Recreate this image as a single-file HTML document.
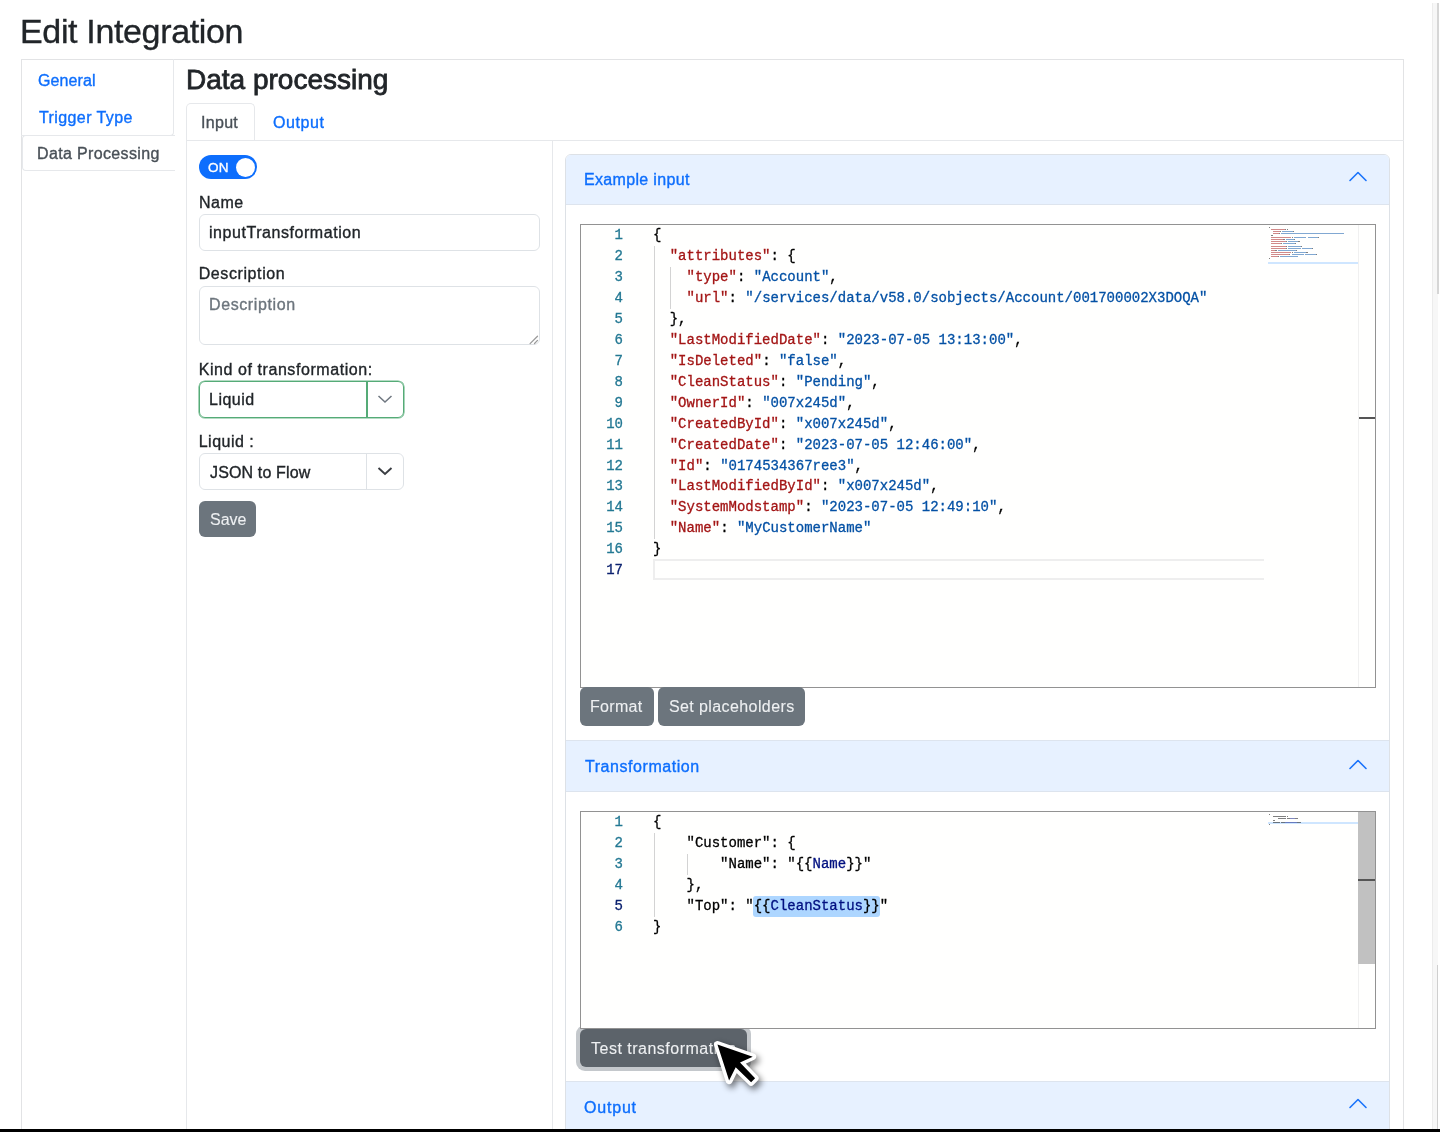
<!DOCTYPE html>
<html>
<head>
<meta charset="utf-8">
<style>
html,body{margin:0;padding:0;background:#fff;width:1440px;height:1132px;overflow:hidden;}
body{position:relative;font-family:"Liberation Sans",sans-serif;color:#212529;-webkit-font-smoothing:antialiased;}
.a{position:absolute;}
.t{position:absolute;white-space:pre;line-height:1;font-size:16px;letter-spacing:.5px;-webkit-text-stroke:.35px currentColor;}
.bl{color:#0d6efd;}
.box{position:absolute;box-sizing:border-box;}
.mono{font-family:"Liberation Mono",monospace;-webkit-text-stroke:.3px currentColor;}
.btn{position:absolute;box-sizing:border-box;background:#6c757d;border-radius:6px;}
.btn .t{color:#eef0f2;-webkit-text-stroke:.1px currentColor;}
</style>
</head>
<body>
<div id="root" style="position:absolute;left:0;top:0;width:1440px;height:1132px;will-change:transform;">
<!-- title -->
<div class="t" style="left:20px;top:14px;font-size:34px;letter-spacing:-.35px">Edit Integration</div>

<!-- outer container -->
<div class="box" style="left:21px;top:59px;width:1383px;height:1200px;border:1px solid #e2e3e5;"></div>
<!-- content column left border -->
<div class="a" style="left:186px;top:140px;width:1px;height:1000px;background:#e6e8eb;"></div>
<!-- left nav right border -->
<div class="box" style="left:21px;top:59px;width:153px;height:77px;border-right:1px solid #e6e8eb;border-bottom:1px solid #e6e8eb;border-bottom-right-radius:4px;"></div>
<!-- active nav item -->
<div class="box" style="left:22px;top:135px;width:153px;height:36px;border:1px solid #e6e8eb;border-right:none;border-radius:4px 0 0 4px;background:#fff;"></div>
<div class="t bl" style="left:38px;top:73px;letter-spacing:.1px">General</div>
<div class="t bl" style="left:39px;top:110px;letter-spacing:.4px">Trigger Type</div>
<div class="t" style="left:37px;top:146px;color:#495057;letter-spacing:.35px">Data Processing</div>

<!-- header -->
<div class="t" style="left:186px;top:65.5px;font-size:28px;letter-spacing:0;-webkit-text-stroke:.8px currentColor">Data processing</div>
<!-- tabs -->
<div class="box" style="left:186px;top:103px;width:69px;height:38px;border:1px solid #e6e8eb;border-bottom:none;border-radius:5px 5px 0 0;background:#fff;"></div>
<div class="t" style="left:201px;top:115px;color:#495057;letter-spacing:.3px">Input</div>
<div class="t bl" style="left:273px;top:115px;letter-spacing:.6px">Output</div>
<!-- tab content top border -->
<div class="a" style="left:186px;top:140px;width:1218px;height:1px;background:#e6e8eb;"></div>
<!-- vertical divider -->
<div class="a" style="left:552px;top:141px;width:1px;height:1000px;background:#e6e8eb;"></div>

<!-- form -->
<div class="a" style="left:199px;top:155px;width:58px;height:24px;border-radius:12px;background:#0d6efd;"></div>
<div class="a" style="left:236px;top:157.5px;width:19px;height:19px;border-radius:50%;background:#fff;"></div>
<div class="t" style="left:208px;top:160.5px;font-size:13.5px;color:#fff;letter-spacing:.3px">ON</div>

<div class="t" style="left:199px;top:195px;">Name</div>
<div class="box" style="left:199px;top:214px;width:341px;height:37px;border:1px solid #dee2e6;border-radius:6px;"></div>
<div class="t" style="left:209px;top:225px;letter-spacing:.55px">inputTransformation</div>

<div class="t" style="left:198.7px;top:266px;letter-spacing:.6px">Description</div>
<div class="box" style="left:199px;top:286px;width:341px;height:59px;border:1px solid #dee2e6;border-radius:6px;"></div>
<div class="t" style="left:209px;top:297px;color:#6c757d;letter-spacing:.6px">Description</div>
<svg class="a" style="left:528px;top:334px" width="12" height="12" viewBox="0 0 12 12"><path d="M2.1 9.6L9.5 2.3M6.5 9.5L9.5 6.4" stroke="#9a9a9a" stroke-width="1.3" stroke-linecap="round"/></svg>

<div class="t" style="left:198.7px;top:361.8px;letter-spacing:.57px">Kind of transformation:</div>
<div class="box" style="left:199px;top:381px;width:205px;height:37px;border:1px solid #55ab77;border-radius:6px;box-shadow:0 0 0 .6px #6db88a;"></div>
<div class="a" style="left:366px;top:382px;width:1.6px;height:35px;background:#55ab77;"></div>
<div class="t" style="left:209px;top:392px;">Liquid</div>
<svg class="a" style="left:377px;top:394px" width="16" height="10" viewBox="0 0 16 10"><path d="M1.5 2L8 8L14.5 2" fill="none" stroke="#6f7780" stroke-width="1.5"/></svg>

<div class="t" style="left:198.7px;top:433.5px;">Liquid :</div>
<div class="box" style="left:199px;top:453px;width:205px;height:37px;border:1px solid #dee2e6;border-radius:6px;"></div>
<div class="a" style="left:366px;top:454px;width:1px;height:35px;background:#dee2e6;"></div>
<div class="t" style="left:210px;top:465px;letter-spacing:.15px">JSON to Flow</div>
<svg class="a" style="left:377px;top:466px" width="16" height="10" viewBox="0 0 16 10"><path d="M1.5 2L8 8L14.5 2" fill="none" stroke="#3a3d42" stroke-width="1.9"/></svg>

<div class="btn" style="left:199px;top:501px;width:57px;height:36px;"><div class="t" style="left:11px;top:11px;letter-spacing:0">Save</div></div>

<!-- accordion -->
<div class="box" style="left:565px;top:154px;width:825px;height:1000px;border:1px solid #dde1e6;border-radius:6px;"></div>
<div class="a" style="left:566px;top:155px;width:823px;height:49px;background:#e7f1ff;border-radius:5px 5px 0 0;border-bottom:1px solid #dde4ee;"></div>
<div class="t bl" style="left:584px;top:172px;letter-spacing:.33px">Example input</div>
<svg class="a" style="left:1348px;top:170px" width="20" height="13" viewBox="0 0 20 13"><path d="M2 10.5L10 2.5L18 10.5" fill="none" stroke="#1a73fb" stroke-width="1.6" stroke-linecap="round" stroke-linejoin="round"/></svg>

<!-- editor 1 -->
<div class="box" style="left:580px;top:224px;width:796px;height:464px;border:1px solid #929292;background:#fffffe;"></div>
<div class="box" style="left:653px;top:558.74px;width:611px;height:20.94px;border:2px solid #eeeeee;border-right:none"></div><div class="a" style="left:1358px;top:225px;width:1px;height:462px;background:#f0f0f0"></div><div class="a" style="left:1268px;top:262px;width:90px;height:1.5px;background:#cfe6ff"></div><div class="a" style="left:1359px;top:417.3px;width:16px;height:2px;background:#555"></div>
<div class="a" style="left:653.50px;top:246.14px;width:1px;height:293.16px;background:#d3d3d3"></div>
<div class="a" style="left:670.30px;top:267.08px;width:1px;height:41.88px;background:#d3d3d3"></div>
<div class="a mono" style="left:563px;top:225.2px;width:60px;text-align:right;font-size:14px;line-height:20.94px;white-space:pre"><div style="height:20.94px;color:#237893">1</div><div style="height:20.94px;color:#237893">2</div><div style="height:20.94px;color:#237893">3</div><div style="height:20.94px;color:#237893">4</div><div style="height:20.94px;color:#237893">5</div><div style="height:20.94px;color:#237893">6</div><div style="height:20.94px;color:#237893">7</div><div style="height:20.94px;color:#237893">8</div><div style="height:20.94px;color:#237893">9</div><div style="height:20.94px;color:#237893">10</div><div style="height:20.94px;color:#237893">11</div><div style="height:20.94px;color:#237893">12</div><div style="height:20.94px;color:#237893">13</div><div style="height:20.94px;color:#237893">14</div><div style="height:20.94px;color:#237893">15</div><div style="height:20.94px;color:#237893">16</div><div style="height:20.94px;color:#0b216f">17</div></div>
<div class="a mono" style="left:652.9px;top:225.2px;font-size:14px;line-height:20.94px;white-space:pre"><div style="height:20.94px"><span style="color:#000000">{</span></div><div style="height:20.94px"><span style="color:#000000">  </span><span style="color:#a31515">&quot;attributes&quot;</span><span style="color:#000000">: {</span></div><div style="height:20.94px"><span style="color:#000000">    </span><span style="color:#a31515">&quot;type&quot;</span><span style="color:#000000">: </span><span style="color:#0451a5">&quot;Account&quot;</span><span style="color:#000000">,</span></div><div style="height:20.94px"><span style="color:#000000">    </span><span style="color:#a31515">&quot;url&quot;</span><span style="color:#000000">: </span><span style="color:#0451a5">&quot;/services/data/v58.0/sobjects/Account/001700002X3DOQA&quot;</span></div><div style="height:20.94px"><span style="color:#000000">  },</span></div><div style="height:20.94px"><span style="color:#000000">  </span><span style="color:#a31515">&quot;LastModifiedDate&quot;</span><span style="color:#000000">: </span><span style="color:#0451a5">&quot;2023-07-05 13:13:00&quot;</span><span style="color:#000000">,</span></div><div style="height:20.94px"><span style="color:#000000">  </span><span style="color:#a31515">&quot;IsDeleted&quot;</span><span style="color:#000000">: </span><span style="color:#0451a5">&quot;false&quot;</span><span style="color:#000000">,</span></div><div style="height:20.94px"><span style="color:#000000">  </span><span style="color:#a31515">&quot;CleanStatus&quot;</span><span style="color:#000000">: </span><span style="color:#0451a5">&quot;Pending&quot;</span><span style="color:#000000">,</span></div><div style="height:20.94px"><span style="color:#000000">  </span><span style="color:#a31515">&quot;OwnerId&quot;</span><span style="color:#000000">: </span><span style="color:#0451a5">&quot;007x245d&quot;</span><span style="color:#000000">,</span></div><div style="height:20.94px"><span style="color:#000000">  </span><span style="color:#a31515">&quot;CreatedById&quot;</span><span style="color:#000000">: </span><span style="color:#0451a5">&quot;x007x245d&quot;</span><span style="color:#000000">,</span></div><div style="height:20.94px"><span style="color:#000000">  </span><span style="color:#a31515">&quot;CreatedDate&quot;</span><span style="color:#000000">: </span><span style="color:#0451a5">&quot;2023-07-05 12:46:00&quot;</span><span style="color:#000000">,</span></div><div style="height:20.94px"><span style="color:#000000">  </span><span style="color:#a31515">&quot;Id&quot;</span><span style="color:#000000">: </span><span style="color:#0451a5">&quot;0174534367ree3&quot;</span><span style="color:#000000">,</span></div><div style="height:20.94px"><span style="color:#000000">  </span><span style="color:#a31515">&quot;LastModifiedById&quot;</span><span style="color:#000000">: </span><span style="color:#0451a5">&quot;x007x245d&quot;</span><span style="color:#000000">,</span></div><div style="height:20.94px"><span style="color:#000000">  </span><span style="color:#a31515">&quot;SystemModstamp&quot;</span><span style="color:#000000">: </span><span style="color:#0451a5">&quot;2023-07-05 12:49:10&quot;</span><span style="color:#000000">,</span></div><div style="height:20.94px"><span style="color:#000000">  </span><span style="color:#a31515">&quot;Name&quot;</span><span style="color:#000000">: </span><span style="color:#0451a5">&quot;MyCustomerName&quot;</span></div><div style="height:20.94px"><span style="color:#000000">}</span></div><div style="height:20.94px"><span style="color:#000000"></span></div></div>
<div class="a" style="left:1268.5px;top:226.5px;width:90px;height:40px"><div class="a" style="left:0.00px;top:0px;width:1.15px;height:1px;background:#00000080"></div><div class="a" style="left:2.30px;top:2px;width:13.80px;height:1px;background:#a3151580"></div><div class="a" style="left:16.10px;top:2px;width:1.15px;height:1px;background:#00000080"></div><div class="a" style="left:18.40px;top:2px;width:1.15px;height:1px;background:#00000080"></div><div class="a" style="left:4.60px;top:4px;width:6.90px;height:1px;background:#a3151580"></div><div class="a" style="left:11.50px;top:4px;width:1.15px;height:1px;background:#00000080"></div><div class="a" style="left:13.80px;top:4px;width:10.35px;height:1px;background:#0451a580"></div><div class="a" style="left:24.15px;top:4px;width:1.15px;height:1px;background:#00000080"></div><div class="a" style="left:4.60px;top:6px;width:5.75px;height:1px;background:#a3151580"></div><div class="a" style="left:10.35px;top:6px;width:1.15px;height:1px;background:#00000080"></div><div class="a" style="left:12.65px;top:6px;width:63.25px;height:1px;background:#0451a580"></div><div class="a" style="left:2.30px;top:8px;width:2.30px;height:1px;background:#00000080"></div><div class="a" style="left:2.30px;top:10px;width:20.70px;height:1px;background:#a3151580"></div><div class="a" style="left:23.00px;top:10px;width:1.15px;height:1px;background:#00000080"></div><div class="a" style="left:25.30px;top:10px;width:12.65px;height:1px;background:#0451a580"></div><div class="a" style="left:39.10px;top:10px;width:10.35px;height:1px;background:#0451a580"></div><div class="a" style="left:49.45px;top:10px;width:1.15px;height:1px;background:#00000080"></div><div class="a" style="left:2.30px;top:12px;width:12.65px;height:1px;background:#a3151580"></div><div class="a" style="left:14.95px;top:12px;width:1.15px;height:1px;background:#00000080"></div><div class="a" style="left:17.25px;top:12px;width:8.05px;height:1px;background:#0451a580"></div><div class="a" style="left:25.30px;top:12px;width:1.15px;height:1px;background:#00000080"></div><div class="a" style="left:2.30px;top:14px;width:14.95px;height:1px;background:#a3151580"></div><div class="a" style="left:17.25px;top:14px;width:1.15px;height:1px;background:#00000080"></div><div class="a" style="left:19.55px;top:14px;width:10.35px;height:1px;background:#0451a580"></div><div class="a" style="left:29.90px;top:14px;width:1.15px;height:1px;background:#00000080"></div><div class="a" style="left:2.30px;top:16px;width:10.35px;height:1px;background:#a3151580"></div><div class="a" style="left:12.65px;top:16px;width:1.15px;height:1px;background:#00000080"></div><div class="a" style="left:14.95px;top:16px;width:11.50px;height:1px;background:#0451a580"></div><div class="a" style="left:26.45px;top:16px;width:1.15px;height:1px;background:#00000080"></div><div class="a" style="left:2.30px;top:19px;width:14.95px;height:1px;background:#a3151580"></div><div class="a" style="left:17.25px;top:19px;width:1.15px;height:1px;background:#00000080"></div><div class="a" style="left:19.55px;top:19px;width:12.65px;height:1px;background:#0451a580"></div><div class="a" style="left:32.20px;top:19px;width:1.15px;height:1px;background:#00000080"></div><div class="a" style="left:2.30px;top:21px;width:14.95px;height:1px;background:#a3151580"></div><div class="a" style="left:17.25px;top:21px;width:1.15px;height:1px;background:#00000080"></div><div class="a" style="left:19.55px;top:21px;width:12.65px;height:1px;background:#0451a580"></div><div class="a" style="left:33.35px;top:21px;width:10.35px;height:1px;background:#0451a580"></div><div class="a" style="left:43.70px;top:21px;width:1.15px;height:1px;background:#00000080"></div><div class="a" style="left:2.30px;top:23px;width:4.60px;height:1px;background:#a3151580"></div><div class="a" style="left:6.90px;top:23px;width:1.15px;height:1px;background:#00000080"></div><div class="a" style="left:9.20px;top:23px;width:18.40px;height:1px;background:#0451a580"></div><div class="a" style="left:27.60px;top:23px;width:1.15px;height:1px;background:#00000080"></div><div class="a" style="left:2.30px;top:25px;width:20.70px;height:1px;background:#a3151580"></div><div class="a" style="left:23.00px;top:25px;width:1.15px;height:1px;background:#00000080"></div><div class="a" style="left:25.30px;top:25px;width:12.65px;height:1px;background:#0451a580"></div><div class="a" style="left:37.95px;top:25px;width:1.15px;height:1px;background:#00000080"></div><div class="a" style="left:2.30px;top:27px;width:18.40px;height:1px;background:#a3151580"></div><div class="a" style="left:20.70px;top:27px;width:1.15px;height:1px;background:#00000080"></div><div class="a" style="left:23.00px;top:27px;width:12.65px;height:1px;background:#0451a580"></div><div class="a" style="left:36.80px;top:27px;width:10.35px;height:1px;background:#0451a580"></div><div class="a" style="left:47.15px;top:27px;width:1.15px;height:1px;background:#00000080"></div><div class="a" style="left:2.30px;top:29px;width:6.90px;height:1px;background:#a3151580"></div><div class="a" style="left:9.20px;top:29px;width:1.15px;height:1px;background:#00000080"></div><div class="a" style="left:11.50px;top:29px;width:18.40px;height:1px;background:#0451a580"></div><div class="a" style="left:0.00px;top:31px;width:1.15px;height:1px;background:#00000080"></div></div>

<div class="btn" style="left:580px;top:687px;width:74px;height:39px;"><div class="t" style="left:10px;top:12px;letter-spacing:.3px">Format</div></div>
<div class="btn" style="left:658px;top:687px;width:147px;height:39px;"><div class="t" style="left:11px;top:12px;letter-spacing:.4px">Set placeholders</div></div>

<div class="a" style="left:566px;top:740px;width:823px;height:50px;background:#e7f1ff;border-top:1px solid #dde4ee;border-bottom:1px solid #dde4ee;"></div>
<div class="t bl" style="left:585px;top:759px;letter-spacing:.55px">Transformation</div>
<svg class="a" style="left:1348px;top:758px" width="20" height="13" viewBox="0 0 20 13"><path d="M2 10.5L10 2.5L18 10.5" fill="none" stroke="#1a73fb" stroke-width="1.6" stroke-linecap="round" stroke-linejoin="round"/></svg>

<!-- editor 2 -->
<div class="a" style="left:576px;top:1025px;width:175px;height:46px;border-radius:9px;background:#c4c8cc;"></div>
<div class="box" style="left:580px;top:811px;width:796px;height:218px;border:1px solid #929292;background:#fffffe;"></div>
<div class="a" style="left:753.20px;top:895.96px;width:127.00px;height:20.94px;background:#add6ff;border-radius:3px"></div><div class="a" style="left:1358px;top:812px;width:1px;height:216px;background:#f0f0f0"></div><div class="a" style="left:1358px;top:812px;width:17px;height:152px;background:#c1c1c1"></div><div class="a" style="left:1358px;top:879px;width:17px;height:2px;background:#555"></div><div class="a" style="left:1268px;top:822px;width:90px;height:1.5px;background:#cfe6ff"></div>
<div class="a" style="left:653.50px;top:833.14px;width:1px;height:83.76px;background:#d3d3d3"></div>
<div class="a" style="left:687.10px;top:854.08px;width:1px;height:20.94px;background:#d3d3d3"></div>
<div class="a mono" style="left:563px;top:812.2px;width:60px;text-align:right;font-size:14px;line-height:20.94px;white-space:pre"><div style="height:20.94px;color:#237893">1</div><div style="height:20.94px;color:#237893">2</div><div style="height:20.94px;color:#237893">3</div><div style="height:20.94px;color:#237893">4</div><div style="height:20.94px;color:#0b216f">5</div><div style="height:20.94px;color:#237893">6</div></div>
<div class="a mono" style="left:652.9px;top:812.2px;font-size:14px;line-height:20.94px;white-space:pre"><div style="height:20.94px"><span style="color:#000000">{</span></div><div style="height:20.94px"><span style="color:#000000">    &quot;Customer&quot;: {</span></div><div style="height:20.94px"><span style="color:#000000">        &quot;Name&quot;: &quot;{{</span><span style="color:#001080">Name</span><span style="color:#000000">}}&quot;</span></div><div style="height:20.94px"><span style="color:#000000">    },</span></div><div style="height:20.94px"><span style="color:#000000">    &quot;Top&quot;: &quot;</span><span style="color:#000000">{{</span><span style="color:#001080">CleanStatus</span><span style="color:#000000">}}</span><span style="color:#000000">&quot;</span></div><div style="height:20.94px"><span style="color:#000000">}</span></div></div>
<div class="a" style="left:1268.5px;top:814px;width:90px;height:40px"><div class="a" style="left:0.00px;top:0px;width:1.15px;height:1px;background:#00000080"></div><div class="a" style="left:4.60px;top:2px;width:12.65px;height:1px;background:#00000080"></div><div class="a" style="left:18.40px;top:2px;width:1.15px;height:1px;background:#00000080"></div><div class="a" style="left:9.20px;top:4px;width:8.05px;height:1px;background:#00000080"></div><div class="a" style="left:18.40px;top:4px;width:3.45px;height:1px;background:#00000080"></div><div class="a" style="left:21.85px;top:4px;width:4.60px;height:1px;background:#00108080"></div><div class="a" style="left:26.45px;top:4px;width:3.45px;height:1px;background:#00000080"></div><div class="a" style="left:4.60px;top:6px;width:2.30px;height:1px;background:#00000080"></div><div class="a" style="left:4.60px;top:8px;width:6.90px;height:1px;background:#00000080"></div><div class="a" style="left:12.65px;top:8px;width:1.15px;height:1px;background:#00000080"></div><div class="a" style="left:13.80px;top:8px;width:2.30px;height:1px;background:#00000080"></div><div class="a" style="left:16.10px;top:8px;width:12.65px;height:1px;background:#00108080"></div><div class="a" style="left:28.75px;top:8px;width:2.30px;height:1px;background:#00000080"></div><div class="a" style="left:31.05px;top:8px;width:1.15px;height:1px;background:#00000080"></div><div class="a" style="left:0.00px;top:10px;width:1.15px;height:1px;background:#00000080"></div></div>

<div class="btn" style="left:580px;top:1029px;width:167px;height:38px;background:#5c636a;"><div class="t" style="left:11px;top:12px;">Test transformation</div></div>

<div class="a" style="left:566px;top:1081px;width:823px;height:60px;background:#e7f1ff;border-top:1px solid #dde4ee;"></div>
<div class="t bl" style="left:584px;top:1100px;letter-spacing:.8px">Output</div>
<svg class="a" style="left:1348px;top:1097px" width="20" height="13" viewBox="0 0 20 13"><path d="M2 10.5L10 2.5L18 10.5" fill="none" stroke="#1a73fb" stroke-width="1.6" stroke-linecap="round" stroke-linejoin="round"/></svg>

<svg class="a" style="left:700px;top:1025px;overflow:visible" width="70" height="70" viewBox="0 0 70 70">
<defs><filter id="sh" x="-50%" y="-50%" width="200%" height="200%"><feGaussianBlur stdDeviation="3"/></filter></defs>
<polygon points="17.45,19.5 52.7,31.7 40,37.6 55.1,53.2 51.1,57.2 35.7,42.3 29.1,55.6" fill="#000" stroke="#000" stroke-width="8" stroke-linejoin="round" opacity=".5" filter="url(#sh)" transform="translate(2.5,3.5)"/>
<polygon points="17.45,19.5 52.7,31.7 40,37.6 55.1,53.2 51.1,57.2 35.7,42.3 29.1,55.6" fill="#fff" stroke="#fff" stroke-width="7" stroke-linejoin="round"/>
<polygon points="17.45,19.5 52.7,31.7 40,37.6 55.1,53.2 51.1,57.2 35.7,42.3 29.1,55.6" fill="#000"/>
</svg>
<!-- browser scrollbar hints -->
<div class="a" style="left:1432px;top:3px;width:5px;height:1126px;background:#f7f7f7;border-left:1px solid #ececec;"></div>
<div class="a" style="left:1437px;top:3px;width:2px;height:291px;background:#d6d6d6;"></div>
<div class="a" style="left:1437px;top:965px;width:1px;height:164px;background:#cfcfcf;"></div>

<!-- bottom black bar -->
<div class="a" style="left:0;top:1129px;width:1440px;height:3px;background:#000;"></div>
</div>
</body>
</html>
